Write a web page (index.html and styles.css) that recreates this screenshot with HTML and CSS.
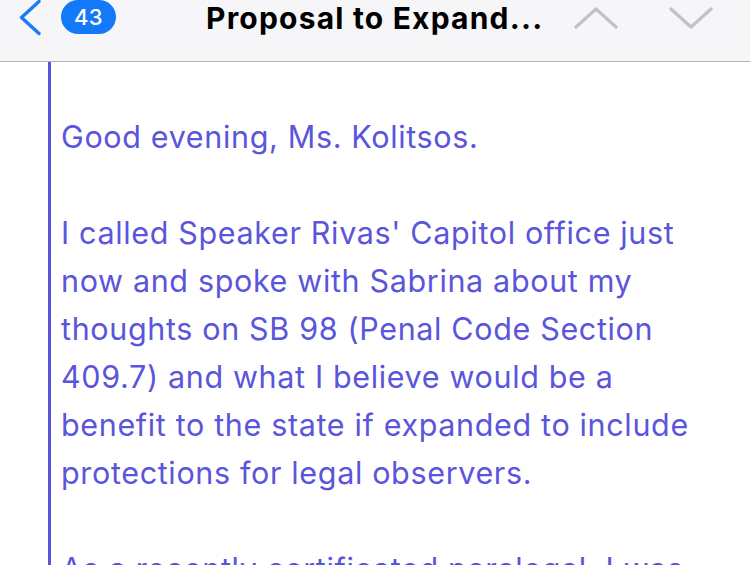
FILE: index.html
```html
<!DOCTYPE html>
<html>
<head>
<meta charset="utf-8">
<link rel="stylesheet" href="styles.css">
</head>
<body>
<header class="nav">
  <div class="nav-left">
    <svg class="back" width="26" height="38" viewBox="0 0 26 38"><path d="M22 2.5 L4.5 18.5 L22 34.5" fill="none" stroke="#1a7cf5" stroke-width="3.4" stroke-linecap="round" stroke-linejoin="round"/></svg>
    <span class="badge">43</span>
  </div>
  <h1 class="title">Proposal to Expand...</h1>
  <div class="nav-right">
    <svg class="arrow" width="44" height="36" viewBox="0 0 44 36"><path d="M2 27 L22 9 L42 27" fill="none" stroke="#c3c3c6" stroke-width="3.4" stroke-linecap="round" stroke-linejoin="round"/></svg>
    <svg class="arrow" width="44" height="36" viewBox="0 0 44 36"><path d="M2 9 L22 27 L42 9" fill="none" stroke="#c3c3c6" stroke-width="3.4" stroke-linecap="round" stroke-linejoin="round"/></svg>
  </div>
</header>
<main class="content">
  <div class="quote">
    <p>Good evening, Ms. Kolitsos.</p>
    <p>I called Speaker Rivas' Capitol office just now and spoke with Sabrina about my thoughts on SB 98 (Penal Code Section 409.7) and what I believe would be a benefit to the state if expanded to include protections for legal observers.</p>
    <p>As a recently certificated paralegal, I was</p>
  </div>
</main>
</body>
</html>
```
FILE: styles.css
```css
html, body {
  margin: 0;
  padding: 0;
  background: #ffffff;
  overflow: hidden;
}
body {
  width: 750px;
  height: 565px;
  font-family: Inter, "Noto Sans", sans-serif;
}
.nav {
  height: 61px;
  background: #f6f6f8;
  border-bottom: 1px solid #b3b3b5;
  display: flex;
  align-items: flex-start;
}
.nav-left {
  display: flex;
  align-items: center;
  gap: 18px;
  padding-left: 17px;
  height: 36px;
}
.back {
  display: block;
}
.badge {
  background: #1479f9;
  color: #fff;
  font-size: 22px;
  font-weight: 500;
  height: 34px;
  min-width: 55px;
  border-radius: 17px;
  display: flex;
  align-items: center;
  justify-content: center;
  margin-top: -2px;
  letter-spacing: 0.5px;
}
.title {
  margin: 0 0 0 90px;
  font-size: 30px;
  font-weight: 700;
  color: #000;
  line-height: 36px;
  letter-spacing: 1.2px;
  white-space: nowrap;
}
.nav-right {
  display: flex;
  gap: 51px;
  margin-left: auto;
  padding-right: 37px;
}
.arrow {
  display: block;
}
.content {
  padding-left: 48px;
}
.quote {
  border-left: 3px solid #5a55db;
  padding: 51px 0 0 10px;
  color: #5a55db;
  font-size: 30.5px;
  line-height: 48px;
  letter-spacing: 0.65px;
}
.quote p {
  margin: 0 0 48px 0;
  width: 665px;
}
```
